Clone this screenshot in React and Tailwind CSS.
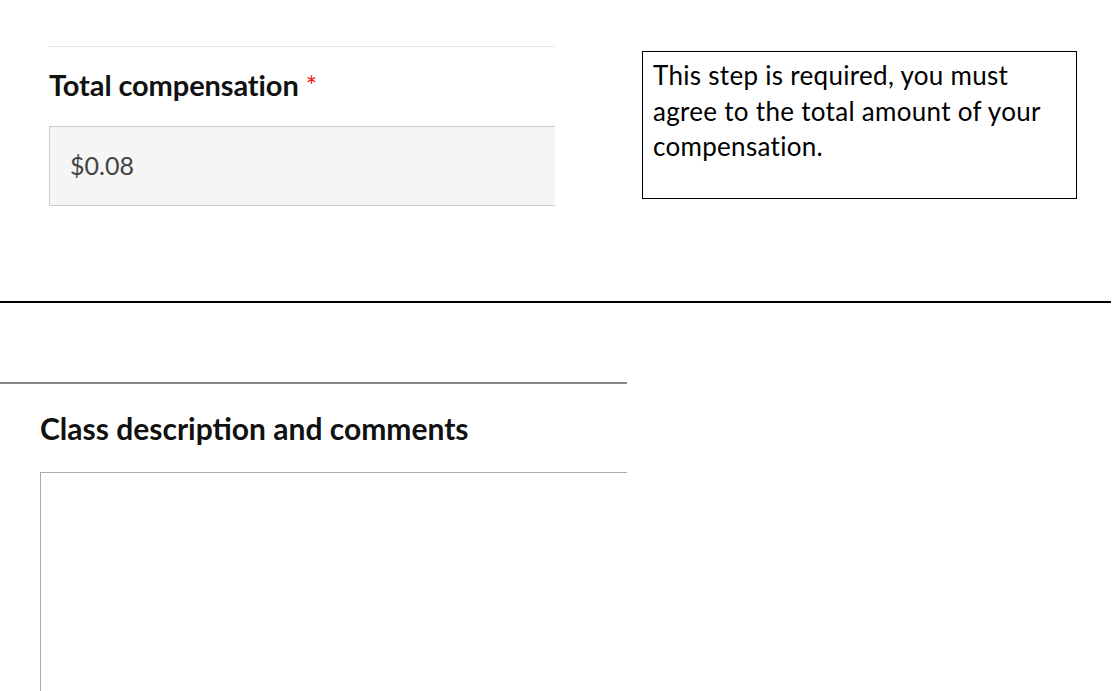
const App = () => {
  return (
    <div className="w-[1119px] h-[691px] overflow-hidden bg-white text-black">
      <div className="flex items-start">
        <div className="ml-[49px] mt-[46px] w-[506px] border-t border-[#e6e6e6]">
          <div className="mt-[20px] flex h-[35px] items-baseline gap-[7px] font-['Lato',sans-serif] leading-[35px]">
            <span className="text-[29px] font-bold tracking-[-0.1px] text-[#111]">Total compensation</span>
            <span className="text-[27px] text-[#f01818]">*</span>
          </div>
          <div className="mt-[24px] flex h-[80px] items-center border border-r-0 border-[#cccccc] bg-[#f5f5f5] pl-[20px] font-['Lato',sans-serif] text-[25px] text-[#444]">
            $0.08
          </div>
        </div>
        <div className="ml-[87px] mt-[51px] h-[148px] w-[435px] border border-black px-[10px] pt-[6px] font-['Lato',sans-serif] text-[26px] leading-[35.5px] tracking-[0.3px] text-black">
          This step is required, you must
          <br />
          agree to the total amount of your
          <br />
          compensation.
        </div>
      </div>

      <div className="mt-[95px] h-[2px] w-[1111px] bg-black"></div>

      <div className="mt-[79px] h-[2px] w-[627px] bg-[#888]"></div>
      <div className="ml-[40px] mt-[26px] font-['Lato',sans-serif] text-[30px] leading-[36px] font-bold text-[#111]">
        Class description and comments
      </div>
      <div className="ml-[40px] mt-[26px] h-[260px] w-[587px] border-l border-t border-[#aaa]"></div>
    </div>
  );
};

export default App;
